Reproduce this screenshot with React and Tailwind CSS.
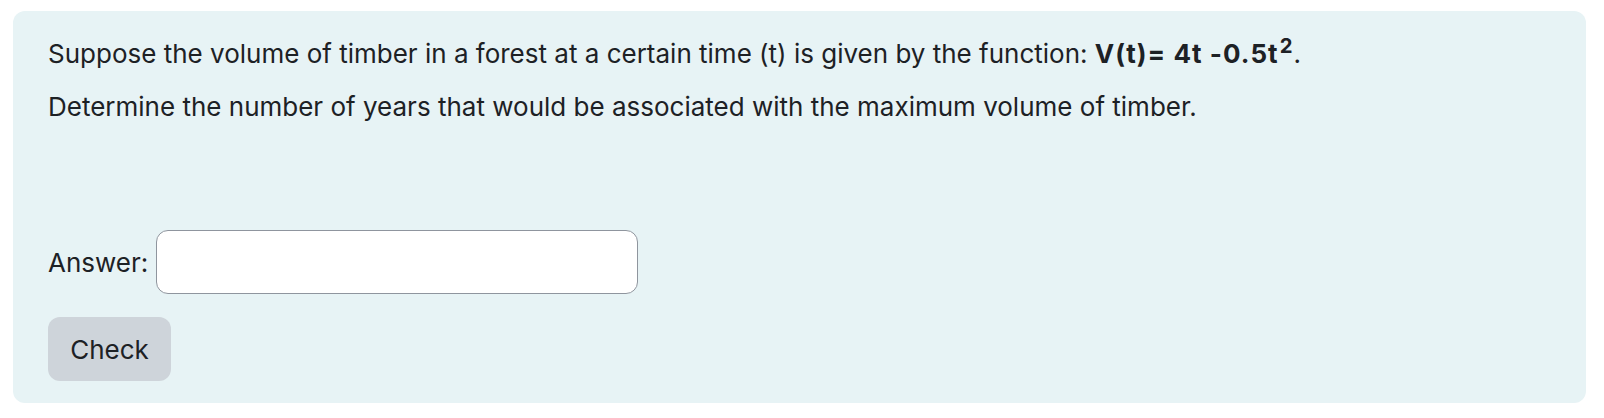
export default function App() {
  return (
    <div className="min-h-screen bg-white pt-[11px] pl-[13px] pr-[18px] font-['Inter',sans-serif] text-[#1d2125]">
      <div className="rounded-[12px] bg-[#e7f3f5] pl-[35px] pr-[35px] pt-[23px] pb-[22px] text-[26px] leading-[39px]">
        <p>
          Suppose the volume of timber in a forest at a certain time (t) is given by the function:{' '}
          <strong className="font-bold tracking-[0.04em]">
            V(t)= 4t -0.5t<sup className="ml-[1px] text-[78%]">2</sup>
          </strong>
          .
        </p>
        <p className="mt-[14px]">
          Determine the number of years that would be associated with the maximum volume of timber.
        </p>

        <div className="mt-[104px] flex items-center">
          <label htmlFor="answer">Answer:</label>
          <input
            id="answer"
            type="text"
            className="ml-[8px] h-[64px] w-[482px] rounded-[12px] border border-[#8f959e] bg-white px-[18px] outline-none"
          />
        </div>

        <button
          type="button"
          className="mt-[23px] h-[64px] w-[123px] rounded-[12px] bg-[#ced4da] text-center"
        >
          Check
        </button>
      </div>
    </div>
  );
}
